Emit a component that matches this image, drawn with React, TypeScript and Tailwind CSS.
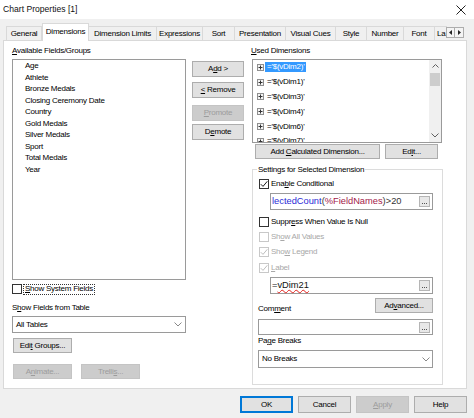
import React from "react";

const U = ({ c }: { c: string }) => (
  <span className="underline underline-offset-[1px] decoration-1">{c}</span>
);

const Check = ({ checked, disabled }: { checked?: boolean; disabled?: boolean }) => (
  <span
    className={`w-[10px] h-[10px] border bg-white flex items-center justify-center shrink-0 ${
      disabled ? "border-[#c8c8c8]" : "border-[#333333]"
    }`}
  >
    {checked && (
      <svg width="8" height="8" viewBox="0 0 8 8">
        <path
          d="M0.8 4.2 L3 6.4 L7.3 1.3"
          fill="none"
          stroke={disabled ? "#bdbdbd" : "#1a1a1a"}
          strokeWidth="1"
        />
      </svg>
    )}
  </span>
);

const Btn = ({
  children,
  className = "",
  disabled,
  def,
}: {
  children: React.ReactNode;
  className?: string;
  disabled?: boolean;
  def?: boolean;
}) => (
  <div
    className={`flex items-center justify-center leading-none ${
      disabled
        ? "bg-[#cccccc] border border-[#c4c4c4] text-[#9c9c9c]"
        : def
        ? "bg-[#e1e1e1] border-2 border-[#0078d7]"
        : "bg-[#e1e1e1] border border-[#adadad]"
    } ${className}`}
  >
    <span className="whitespace-nowrap">{children}</span>
  </div>
);

const Dots = () => (
  <span className="w-[11px] h-[11px] border border-[#b5b5b5] bg-[#e8e8e8] flex items-end justify-center pb-[2px] shrink-0">
    <span className="flex gap-[1px]">
      <span className="w-[1px] h-[1px] bg-[#555]" />
      <span className="w-[1px] h-[1px] bg-[#555]" />
      <span className="w-[1px] h-[1px] bg-[#555]" />
    </span>
  </span>
);

const Chevron = ({ color = "#888" }: { color?: string }) => (
  <svg width="8" height="5" viewBox="0 0 8 5">
    <path d="M0.5 0.5 L4 4 L7.5 0.5" fill="none" stroke={color} strokeWidth="1" />
  </svg>
);

const ChevronUp = ({ color = "#606060" }: { color?: string }) => (
  <svg width="7" height="4" viewBox="0 0 7 4">
    <path d="M0.5 3.5 L3.5 0.5 L6.5 3.5" fill="none" stroke={color} strokeWidth="1" />
  </svg>
);

const Plus = () => (
  <svg width="7" height="7" viewBox="0 0 7 7" className="shrink-0">
    <rect x="0.5" y="0.5" width="6" height="6" fill="#f4f4f4" stroke="#8f8f8f" strokeWidth="1" />
    <path d="M1.5 3.5 H5.5 M3.5 1.5 V5.5" stroke="#333" strokeWidth="1" />
  </svg>
);

const fields = [
  "Age",
  "Athlete",
  "Bronze Medals",
  "Closing Ceremony Date",
  "Country",
  "Gold Medals",
  "Silver Medals",
  "Sport",
  "Total Medals",
  "Year",
];

const dims = ["2", "1", "3", "4", "6", "7"];

const tabs: { label: string; w: string; sel?: boolean }[] = [
  { label: "General", w: "w-[36px]" },
  { label: "Dimensions", w: "w-[47px]", sel: true },
  { label: "Dimension Limits", w: "w-[68px]" },
  { label: "Expressions", w: "w-[46px]" },
  { label: "Sort", w: "w-[32px]" },
  { label: "Presentation", w: "w-[51px]" },
  { label: "Visual Cues", w: "w-[50px]" },
  { label: "Style", w: "w-[31px]" },
  { label: "Number", w: "w-[37px]" },
  { label: "Font", w: "w-[31px]" },
];

export default function App() {
  return (
    <div className="w-[474px] h-[418px] bg-[#f0f0f0] overflow-hidden font-['Liberation_Sans',Arial,sans-serif] text-[8px] tracking-[-0.25px] text-black flex flex-col">
      {/* title bar */}
      <div className="h-[19px] bg-white flex items-center justify-between pl-[3px] pr-[8px] shrink-0">
        <span className="text-[8.6px] tracking-[0px] text-[#111]">Chart Properties [1]</span>
        <svg width="10" height="10" viewBox="0 0 10 10">
          <path d="M0.5 0.5 L9.5 9.5 M9.5 0.5 L0.5 9.5" stroke="#222" strokeWidth="1" />
        </svg>
      </div>

      <div className="flex flex-col px-[3px]">
        {/* tabs */}
        <div className="h-[22px] flex items-end pl-[3px] relative z-10 -mb-px">
          {tabs.map((t, i) =>
            t.sel ? (
              <div
                key={t.label}
                className={`${t.w} h-[18px] bg-white border-x border-t border-[#d9d9d9] flex items-center justify-center pb-[2px] shrink-0`}
              >
                {t.label}
              </div>
            ) : (
              <div
                key={t.label}
                className={`${t.w} h-[14px] mb-[1px] bg-[#f0f0f0] border-t border-r border-[#d9d9d9] ${
                  i === 0 ? "border-l" : ""
                } flex items-center justify-center shrink-0 whitespace-nowrap`}
              >
                {t.label}
              </div>
            )
          )}
          <div className="w-[12px] h-[14px] mb-[1px] border-t border-[#d9d9d9] overflow-hidden flex items-center pl-[2px] shrink-0 whitespace-nowrap">
            La
          </div>
          <div className="flex mb-[3px] shrink-0 -ml-[1px]">
            <div className="w-[9px] h-[11px] border border-[#adadad] bg-[#f4f4f4] flex items-center justify-center">
              <svg width="3" height="5" viewBox="0 0 3 5">
                <path d="M3 0 L0 2.5 L3 5 Z" fill="#222" />
              </svg>
            </div>
            <div className="w-[9px] h-[11px] border border-l-0 border-[#adadad] bg-[#f4f4f4] flex items-center justify-center">
              <svg width="3" height="5" viewBox="0 0 3 5">
                <path d="M0 0 L3 2.5 L0 5 Z" fill="#222" />
              </svg>
            </div>
          </div>
        </div>

        {/* panel */}
        <div className="w-[464px] h-[349px] bg-white border border-[#d9d9d9] flex">
          {/* left column */}
          <div className="ml-[8px] w-[174px] flex flex-col">
            <div className="mt-[4px] h-[11px] leading-[11px]">
              <U c="A" />vailable Fields/Groups
            </div>
            <div className="mt-[3px] h-[221px] border border-[#9a9a9a] pl-[12px] flex flex-col">
              {fields.map((f) => (
                <div key={f} className="h-[11.5px] leading-[11.5px] whitespace-nowrap">
                  {f}
                </div>
              ))}
            </div>
            <div className="mt-[4px] h-[10px] flex items-center">
              <Check />
              <span className="ml-[1px] h-[11px] px-[1px] border border-dotted border-[#333] flex items-center leading-none">
                <span className="whitespace-nowrap">
                  <U c="S" />how System Fields
                </span>
              </span>
            </div>
            <div className="mt-[8px] h-[11px] leading-[11px]">
              S<U c="h" />ow Fields from Table
            </div>
            <div className="mt-[3px] h-[17px] border border-[#9a9a9a] flex items-center justify-between pl-[3px] pr-[3px]">
              <span>All Tables</span>
              <Chevron />
            </div>
            <Btn className="mt-[5px] h-[15px] w-[59px] ml-[1px]">
              Edi<U c="t" /> Groups...
            </Btn>
            <div className="mt-[11px] flex gap-[9px] ml-[1px]">
              <Btn disabled className="h-[15px] w-[59px]">
                A<U c="n" />imate...
              </Btn>
              <Btn disabled className="h-[15px] w-[59px]">
                Trelli<U c="s" />...
              </Btn>
            </div>
          </div>

          {/* middle column */}
          <div className="ml-[6px] w-[52px] flex flex-col">
            <Btn className="mt-[20px] h-[16px]">
              A<U c="d" />d &gt;
            </Btn>
            <Btn className="mt-[5px] h-[16px]">
              <U c="<" /> Remove
            </Btn>
            <Btn disabled className="mt-[7px] h-[16px]">
              <U c="P" />romote
            </Btn>
            <Btn className="mt-[3px] h-[16px]">
              D<U c="e" />mote
            </Btn>
          </div>

          {/* right column */}
          <div className="ml-[7px] w-[192px] flex flex-col">
            <div className="mt-[4px] h-[11px] leading-[11px]">
              <U c="U" />sed Dimensions
            </div>
            <div className="mt-[3px] ml-[1px] w-[190px] h-[84px] border border-[#9a9a9a] flex overflow-hidden">
              <div className="flex-1 flex flex-col pl-[4px]">
                {dims.map((d, i) => (
                  <div key={d} className="h-[14.8px] flex items-center shrink-0">
                    <Plus />
                    <span
                      className={`ml-[1px] px-[2px] h-[10px] leading-[10px] whitespace-nowrap ${
                        i === 0 ? "bg-[#3399ff] text-white" : ""
                      }`}
                    >
                      {"='$(vDim" + d + ")'"}
                    </span>
                  </div>
                ))}
              </div>
              <div className="w-[12px] bg-[#f0f0f0] flex flex-col items-center">
                <div className="h-[12px] flex items-center justify-center">
                  <ChevronUp />
                </div>
                <div className="mt-[1px] w-[10px] h-[13px] bg-[#cdcdcd]" />
                <div className="flex-1" />
                <div className="h-[13px] flex items-center justify-center">
                  <Chevron color="#606060" />
                </div>
              </div>
            </div>
            <div className="mt-[1px] flex">
              <Btn className="ml-[4px] w-[125px] h-[15px]">
                Add <U c="C" />alculated Dimension...
              </Btn>
              <Btn className="ml-[5px] w-[53px] h-[15px]">
                Ed<U c="i" />t...
              </Btn>
            </div>

            <fieldset className="mt-[5px] ml-[1px] w-[191px] border border-[#dcdcdc] min-w-0">
              <legend className="ml-[4px] px-[1px] leading-[11px]">Settings for Selected Dimension</legend>
              <div className="pl-[6px] pb-[16px] flex flex-col">
                <div className="mt-[4px] h-[10px] flex items-center">
                  <Check checked />
                  <span className="ml-[2px] leading-none whitespace-nowrap">
                    Ena<U c="b" />le Conditional
                  </span>
                </div>
                <div className="mt-[4px] ml-[11px] w-[163px] h-[17px] border border-[#9a9a9a] flex items-center justify-between pl-[1px] pr-[2px]">
                  <span className="text-[9.3px] tracking-[0px] leading-none whitespace-nowrap">
                    <span className="text-[#2b2bd6]">lectedCount</span>
                    <span className="text-[#333]">(</span>
                    <span className="text-[#a3214a]">%FieldNames</span>
                    <span className="text-[#333]">)&gt;20</span>
                  </span>
                  <Dots />
                </div>
                <div className="mt-[7px] h-[10px] flex items-center">
                  <Check />
                  <span className="ml-[2px] leading-none whitespace-nowrap">
                    Suppr<U c="e" />ss When Value Is Null
                  </span>
                </div>
                <div className="mt-[5px] h-[10px] flex items-center text-[#a8a8a8]">
                  <Check disabled />
                  <span className="ml-[2px] leading-none whitespace-nowrap">
                    Sh<U c="o" />w All Values
                  </span>
                </div>
                <div className="mt-[5px] h-[10px] flex items-center text-[#a8a8a8]">
                  <Check checked disabled />
                  <span className="ml-[2px] leading-none whitespace-nowrap">
                    Sho<U c="w" /> Legend
                  </span>
                </div>
                <div className="mt-[6px] h-[10px] flex items-center text-[#a8a8a8]">
                  <Check checked disabled />
                  <span className="ml-[2px] leading-none">
                    <U c="L" />abel
                  </span>
                </div>
                <div className="mt-[4px] ml-[11px] w-[163px] h-[17px] border border-[#9a9a9a] flex items-center justify-between pl-[1px] pr-[2px]">
                  <span className="text-[9.3px] tracking-[0px] leading-none whitespace-nowrap text-[#111]">
                    =
                    <span className="underline decoration-wavy decoration-[#e0201b] decoration-1 underline-offset-[1px]">
                      vDim21
                    </span>
                  </span>
                  <Dots />
                </div>
                <div className="mt-[4px] h-[15px] flex items-end justify-between">
                  <span className="-ml-[1px] -mb-[1px] leading-[11px]">
                    Com<U c="m" />ent
                  </span>
                  <Btn className="mr-[9px] w-[58px] h-[15px]">
                    Ad<U c="v" />anced...
                  </Btn>
                </div>
                <div className="mt-[6px] -ml-[1px] w-[175px] h-[16px] border border-[#9a9a9a] flex items-center justify-end pr-[2px]">
                  <Dots />
                </div>
                <div className="-ml-[1px] h-[11px] leading-[11px]">
                  Pa<U c="g" />e Breaks
                </div>
                <div className="mt-[4px] -ml-[1px] w-[175px] h-[18px] border border-[#9a9a9a] flex items-center justify-between pl-[3px] pr-[2px]">
                  <span>No Breaks</span>
                  <Chevron />
                </div>
              </div>
            </fieldset>
          </div>
        </div>

        {/* bottom buttons */}
        <div className="mt-[7px] flex justify-end gap-[5px] pr-[4px]">
          <Btn def className="w-[53px] h-[17px]">
            OK
          </Btn>
          <Btn className="w-[53px] h-[17px]">Cancel</Btn>
          <Btn disabled className="w-[53px] h-[17px]">
            <U c="A" />pply
          </Btn>
          <Btn className="w-[53px] h-[17px]">Help</Btn>
        </div>
      </div>
    </div>
  );
}
